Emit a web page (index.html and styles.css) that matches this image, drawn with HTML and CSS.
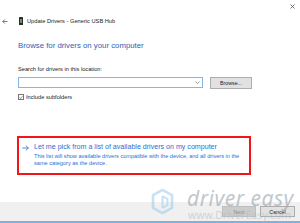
FILE: index.html
```html
<!DOCTYPE html>
<html>
<head>
<meta charset="utf-8">
<link rel="stylesheet" href="styles.css">
</head>
<body>
<div class="window">
  <div class="topbar">
    <svg class="close" width="5" height="5" viewBox="0 0 5 5"><path d="M0.5 0.5L4.5 4.5M4.5 0.5L0.5 4.5" stroke="#555" stroke-width="0.8"/></svg>
  </div>
  <div class="header">
    <svg class="back" width="6" height="5" viewBox="0 0 6 5"><path d="M5.5 2.5H0.8M2.8 0.5L0.8 2.5L2.8 4.5" stroke="#444" stroke-width="0.7" fill="none"/></svg>
    <svg class="device" width="4" height="8" viewBox="0 0 4 8"><rect x="0" y="0" width="4" height="8" rx="0.6" fill="#2b2b2b"/><rect x="1" y="2" width="2" height="4" fill="#6a9a52"/></svg>
    <span class="title">Update Drivers - Generic USB Hub</span>
  </div>
  <div class="content">
    <h1 class="heading">Browse for drivers on your computer</h1>
    <div class="label">Search for drivers in this location:</div>
    <div class="search-row">
      <div class="input">
        <svg class="chevron" width="5" height="3" viewBox="0 0 5 3"><path d="M0.5 0.5L2.5 2.5L4.5 0.5" stroke="#555" stroke-width="0.6" fill="none"/></svg>
      </div>
      <div class="btn browse">Browse...</div>
    </div>
    <div class="check-row">
      <span class="checkbox"><svg width="5" height="5" viewBox="0 0 5 5"><path d="M0.6 2.6L1.9 3.9L4.4 0.9" stroke="#555" stroke-width="0.8" fill="none"/></svg></span>
      <span>Include subfolders</span>
    </div>
    <div class="pick">
      <svg class="pick-arrow" width="7" height="6" viewBox="0 0 7 6"><path d="M0.3 3H6.4M3.8 0.5L6.4 3L3.8 5.5" stroke="#1f6fd6" stroke-width="0.8" fill="none"/></svg>
      <div class="pick-text">
        <div class="pick-title">Let me pick from a list of available drivers on my computer</div>
        <div class="pick-desc">This list will show available drivers compatible with the device, and all drivers in the same category as the device.</div>
      </div>
    </div>
  </div>
  <div class="footer">
    <div class="btn next">Next</div>
    <div class="btn cancel">Cancel</div>
  </div>
  <div class="watermark">
    <svg class="wm-logo" width="23" height="27" viewBox="0 0 23 27"><path d="M11.5 1.8L21 7.2V19.8L11.5 25.2L2 19.8V7.2Z" stroke="#9ccbee" stroke-width="2.6" fill="none" stroke-linejoin="round"/><path d="M11.5 8V20M11.5 8L16.5 11V17L11.5 20" stroke="#9ccbee" stroke-width="2" fill="none"/></svg>
    <div class="wm-text">
      <div class="wm-brand">driver easy</div>
      <div class="wm-url">www.DriverEasy.com</div>
    </div>
  </div>
</div>
</body>
</html>
```
FILE: styles.css
```css
* { box-sizing: border-box; }
html, body { margin: 0; padding: 0; }
body { width: 300px; height: 223px; overflow: hidden; background: #fff; font-family: "Liberation Sans", Arial, sans-serif; color: #000; }
.window { position: relative; width: 300px; height: 223px; display: flex; flex-direction: column; background: #fff; overflow: hidden; }
.topbar { height: 12px; display: flex; justify-content: flex-end; align-items: center; padding-right: 5px; }
.header { height: 18px; display: flex; align-items: center; padding-left: 2px; }
.back { margin-right: 11px; }
.device { margin-right: 4px; }
.title { font-size: 5.7px; color: #222; }
.content { padding-left: 18px; padding-right: 10px; display: flex; flex-direction: column; }
.heading { margin: 10px 0 0; height: 12px; line-height: 12px; font-size: 7.8px; font-weight: normal; color: #2f5fb4; }
.label { margin-top: 13px; height: 8px; line-height: 8px; font-size: 5.7px; color: #222; }
.search-row { margin-top: 4px; height: 12px; display: flex; align-items: flex-start; }
.input { width: 185px; height: 11px; border: 1px solid #86b6e4; display: flex; align-items: center; justify-content: flex-end; padding-right: 2px; }
.btn { height: 12px; border: 1px solid #adadad; background: #e1e1e1; font-size: 5.3px; color: #222; display: flex; align-items: center; justify-content: center; }
.browse { margin-left: 7px; width: 42px; }
.check-row { margin-top: 3px; height: 10px; display: flex; align-items: center; font-size: 5.7px; color: #222; }
.checkbox { width: 6px; height: 6px; border: 0.6px solid #777; margin-right: 2px; display: flex; align-items: center; justify-content: center; background: #fff; }
.pick { margin-top: 34px; margin-left: -1px; width: 234px; height: 39px; border: 2px solid #f2161b; display: flex; align-items: flex-start; padding: 5px 0 0 3px; }
.pick-arrow { margin-top: 2px; margin-right: 5px; flex: none; }
.pick-text { color: #1f6fd6; }
.pick-title { font-size: 7.1px; line-height: 9px; white-space: nowrap; }
.pick-desc { font-size: 5.6px; line-height: 7px; margin-top: 1px; width: 218px; }
.footer { margin-top: auto; height: 21px; background: #f0f0f0; border-bottom: 2px solid #7cb2e2; display: flex; justify-content: flex-end; align-items: center; padding-right: 5px; gap: 4px; }
.next { width: 34px; height: 11px; background: #cccccc; border-color: #bfbfbf; color: #8a8a8a; }
.cancel { width: 35px; height: 11px; }
.watermark { position: absolute; left: 151px; top: 187px; display: flex; align-items: flex-start; opacity: 0.55; pointer-events: none; }
.wm-logo { margin-right: 13px; margin-top: 1px; }
.wm-text { display: flex; flex-direction: column; }
.wm-brand { font-family: "Noto Sans", sans-serif; font-style: italic; font-size: 21px; line-height: 22px; color: #8f9aa6; letter-spacing: 0.5px; }
.wm-url { font-family: "Noto Sans", sans-serif; font-size: 10.5px; line-height: 12px; color: #b3bbc3; margin-left: 1px; }
```
